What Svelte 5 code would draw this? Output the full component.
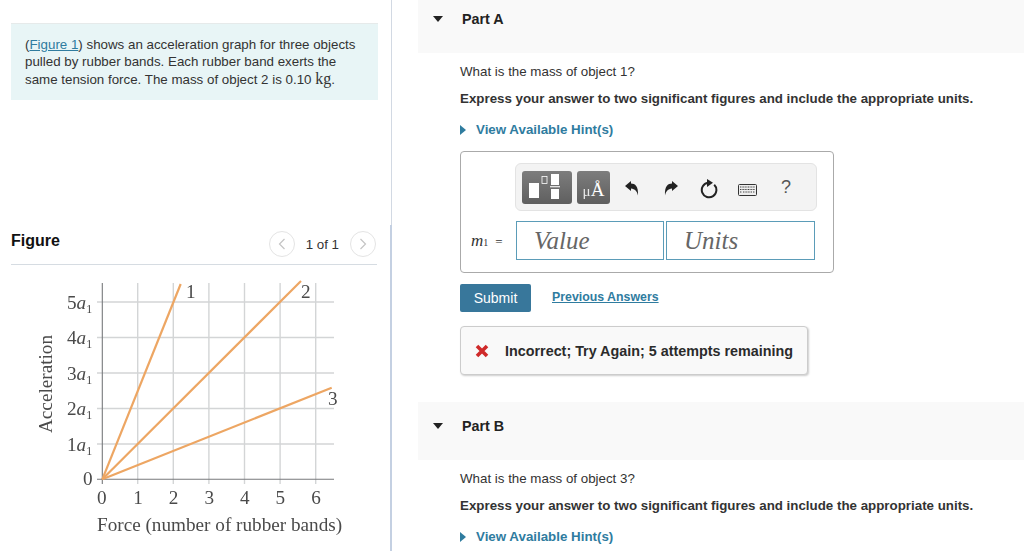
<script lang="ts">
	const gridX = [137.7, 173.3, 208.9, 244.5, 280.1, 315.7];
	const gridY = [302, 337.5, 373, 408.5, 444];
	const yLabels = ['5', '4', '3', '2', '1'];

	const parts = [
		{ name: 'Part A', question: 'What is the mass of object 1?' },
		{ name: 'Part B', question: 'What is the mass of object 3?' }
	];
</script>

<div class="page">
	<section class="left">
		<div class="intro">
			(<a href="#figure">Figure 1</a>) shows an acceleration graph for three objects pulled by rubber
			bands. Each rubber band exerts the same tension force. The mass of object 2 is 0.10 <span
				class="unit">kg</span>.
		</div>

		<div class="figure-head">
			<h2>Figure</h2>
			<div class="pager">
				<span class="round">
					<svg width="8" height="12" viewBox="0 0 8 12"><path d="M6.5 1 1.5 6l5 5" /></svg>
				</span>
				<span class="count">1 of 1</span>
				<span class="round">
					<svg width="8" height="12" viewBox="0 0 8 12"><path d="M1.5 1l5 5-5 5" /></svg>
				</span>
			</div>
		</div>

		<svg class="graph" width="366" height="286" viewBox="11 265 366 286">
			<g class="grid">
				{#each gridX as x}
					<line x1={x} y1="283" x2={x} y2="484" />
				{/each}
				{#each gridY as y}
					<line x1="97" y1={y} x2="334" y2={y} />
				{/each}
			</g>
			<g class="axis">
				<line x1="102.3" y1="283" x2="102.3" y2="484" />
				<line x1="97" y1="479.3" x2="334" y2="479.3" />
			</g>
			<g class="curves">
				<line x1="102.3" y1="479.3" x2="180.7" y2="284" />
				<line x1="102.3" y1="479.3" x2="301" y2="281" />
				<line x1="102.3" y1="479.3" x2="331.7" y2="387.7" />
			</g>
			<g class="labels">
				<text x="186" y="298">1</text>
				<text x="301" y="298">2</text>
				<text x="328" y="405">3</text>
				{#each yLabels as n, i}
					<text x="67" y={gridY[i] + 6.5}>{n}<tspan font-style="italic">a</tspan><tspan class="sub" dy="4">1</tspan></text>
				{/each}
				<text x="83" y="485">0</text>
				<text x="97" y="504">0</text>
				{#each gridX as x, i}
					<text x={x - 4.5} y="504">{i + 1}</text>
				{/each}
				<text x="97" y="531">Force (number of rubber bands)</text>
				<text transform="translate(52 433) rotate(-90)">Acceleration</text>
			</g>
		</svg>
	</section>

	<main class="right">
		{#each parts as part, i}
			<header class="part-head">
				<span class="caret"></span>
				<h3>{part.name}</h3>
			</header>
			<div class="part-body">
				<p class="question">{part.question}</p>
				<p class="instruction">Express your answer to two significant figures and include the appropriate units.</p>
				<div class="hint"><span class="hint-arrow"></span>View Available Hint(s)</div>

				{#if i === 0}
					<div class="answer">
						<div class="toolbar">
							<span class="tool tool-templates">
								<svg width="50" height="33" viewBox="0 0 50 33">
									<rect x="7" y="12" width="10" height="15" fill="#fff" />
									<rect x="20" y="5.4" width="5" height="7" fill="none" stroke="#fff" stroke-width="0.8" />
									<rect x="29" y="3" width="8" height="11" fill="#fff" />
									<rect x="28" y="15.2" width="10" height="1.1" fill="#fff" />
									<rect x="29" y="18" width="8" height="10" fill="#fff" />
								</svg>
							</span>
							<span class="tool tool-units"><small>μ</small>Å</span>
							<svg class="ic undo" width="14" height="16" viewBox="0 0 14 16">
								<path d="M0 5 6 0V2.5C10 2.5 13.5 5 13 14.5 12 10 10 8 6 7.5V10Z" />
							</svg>
							<svg class="ic redo" width="14" height="16" viewBox="0 0 14 16">
								<path d="M14 5 8 0V2.5C4 2.5 .5 5 1 14.5 2 10 4 8 8 7.5V10Z" />
							</svg>
							<svg class="ic reset" width="18" height="20" viewBox="0 0 18 20">
								<path class="ring" d="M14.2 5.8A7.3 7.3 0 1 1 8 3.8" />
								<path d="M7 0 13 3.7 7 8Z" />
							</svg>
							<svg class="ic keys" width="19" height="12" viewBox="0 0 19 12">
								<rect x="0.5" y="0.5" width="18" height="11" rx="1" fill="#eee" stroke="#333" />
								<path class="key-rows" d="M2 3h15M2 5.5h15M2 8h2M5 8h9M15 8h2" />
							</svg>
							<span class="help">?</span>
						</div>
						<div class="entry">
							<span class="var"><i>m</i><sub>1</sub><span class="eq">=</span></span>
							<span class="field">Value</span>
							<span class="field units">Units</span>
						</div>
					</div>

					<div class="actions">
						<button type="button">Submit</button>
						<a href="#previous">Previous Answers</a>
					</div>

					<div class="feedback">
						<svg width="14" height="14" viewBox="0 0 14 14">
							<path d="M2 2 12 12M12 2 2 12" />
						</svg>
						<span>Incorrect; Try Again; 5 attempts remaining</span>
					</div>
				{/if}
			</div>
		{/each}
	</main>
</div>

<style>
	:global(body) {
		margin: 0;
		background: #fff;
	}

	.page {
		display: flex;
		height: 551px;
		overflow: hidden;
		font-family: 'Liberation Sans', Arial, sans-serif;
		font-size: 13.33px;
		color: #333;
	}

	.left {
		position: relative;
		width: 392px;
		box-sizing: border-box;
		flex-shrink: 0;
		padding: 23px 0 0 11px;
		border-right: 1px solid #d2d9e3;
	}

	/* divider gets heavier from the figure down */
	.left::after {
		content: '';
		position: absolute;
		top: 225px;
		bottom: 0;
		left: 390px;
		width: 2px;
		background: #c4d0e2;
	}

	.intro {
		width: 367px;
		height: 77px;
		box-sizing: border-box;
		padding: 12px 14px 0;
		background: #e8f5f6;
		border-top: 1px solid #e6eaea;
		line-height: 17px;
	}

	.intro a {
		color: #2f7c9f;
	}

	.unit {
		font-family: 'Liberation Serif', serif;
		font-size: 16px;
	}

	.figure-head {
		display: flex;
		align-items: center;
		justify-content: space-between;
		width: 366px;
		height: 41px;
		margin-top: 124px;
		border-bottom: 1px solid #d6dce2;
		box-sizing: border-box;
	}

	h2 {
		margin: 0 0 6px;
		font-size: 16px;
		color: #111;
	}

	.pager {
		display: flex;
		align-items: center;
		gap: 11px;
		margin-right: 1px;
	}

	.round {
		display: flex;
		align-items: center;
		justify-content: center;
		box-sizing: border-box;
		width: 26px;
		height: 26px;
		border: 1px solid #e4e4e4;
		border-radius: 50%;
	}

	.round path {
		fill: none;
		stroke: #c4c4c4;
		stroke-width: 1.2;
	}

	.graph {
		display: block;
		filter: blur(0.4px);
	}

	.grid line {
		stroke: #d3d5d6;
		stroke-width: 1.4;
	}

	.axis line {
		stroke: #77797b;
		stroke-width: 1.1;
	}

	.curves line {
		stroke: #eda663;
		stroke-width: 2.2;
	}

	.labels text {
		font-family: 'Liberation Serif', serif;
		font-size: 19.2px;
		fill: #4a4a4a;
	}

	.sub {
		font-size: 12px;
	}

	.right {
		flex: 1;
		margin-top: -5px;
		padding-left: 26px;
	}

	.part-head {
		display: flex;
		align-items: flex-start;
		height: 58px;
		box-sizing: border-box;
		padding: 16px 0 0 15px;
		background: #f9f9f9;
	}

	.caret {
		width: 0;
		height: 0;
		margin-top: 5px;
		border-left: 5px solid transparent;
		border-right: 5px solid transparent;
		border-top: 6px solid #222;
	}

	h3 {
		margin: 0 0 0 19px;
		font-size: 14.3px;
		line-height: 16px;
		color: #222;
	}

	.part-body {
		padding: 11px 0 0 42px;
	}

	.part-body:not(:last-child) {
		height: 349px;
		box-sizing: border-box;
	}

	p {
		margin: 0;
		line-height: 15px;
	}

	.instruction {
		margin-top: 12px;
		font-weight: 700;
	}

	.hint {
		display: flex;
		align-items: center;
		margin-top: 16px;
		font-weight: 700;
		color: #2f7c9f;
		line-height: 15px;
	}

	.hint-arrow {
		width: 0;
		height: 0;
		margin-right: 10px;
		border-top: 5px solid transparent;
		border-bottom: 5px solid transparent;
		border-left: 6px solid #2f7c9f;
	}

	.answer {
		box-sizing: border-box;
		width: 374px;
		height: 122px;
		margin-top: 14px;
		padding: 11px 0 0 54px;
		border: 1px solid #aaa;
		border-radius: 4px;
	}

	.toolbar {
		display: flex;
		align-items: center;
		box-sizing: border-box;
		width: 302px;
		height: 48px;
		padding-left: 6px;
		background: #f3f3f3;
		border: 1px solid #e3e3e3;
		border-radius: 6px;
	}

	.tool {
		display: flex;
		align-items: center;
		justify-content: center;
		height: 33px;
		background: linear-gradient(#7d7d7d, #5f5f5f);
		border-radius: 3px;
		color: #fff;
	}

	.tool-templates {
		width: 50px;
	}

	.tool-units {
		align-items: baseline;
		box-sizing: border-box;
		padding-top: 8px;
		width: 33px;
		margin-left: 5px;
		font-family: 'Liberation Serif', serif;
		font-size: 19px;
	}

	.tool-units small {
		font-size: 15px;
		opacity: 0.85;
	}

	.ic {
		display: block;
		margin-top: 4px;
		fill: #222;
	}

	.undo {
		margin-left: 15px;
	}

	.redo {
		margin-left: 25px;
	}

	.reset {
		margin-left: 22px;
	}

	.reset .ring {
		fill: none;
		stroke: #222;
		stroke-width: 2;
	}

	.keys {
		margin-left: 20px;
		margin-top: 5px;
	}

	.key-rows {
		fill: none;
		stroke: #444;
		stroke-width: 1.2;
		stroke-dasharray: 1 0.6;
	}

	.help {
		margin-left: 24px;
		font-size: 18px;
		color: #555;
	}

	.entry {
		display: flex;
		align-items: center;
		margin: 10px 0 0 -54px;
	}

	.var {
		display: flex;
		align-items: baseline;
		width: 55px;
		box-sizing: border-box;
		padding-left: 10px;
		font-family: 'Liberation Serif', serif;
		font-size: 17px;
		white-space: nowrap;
	}

	.var sub {
		font-size: 10px;
		line-height: 0;
		margin-top: 3px;
	}

	.eq {
		margin-left: 7px;
		font-size: 13px;
	}

	.field {
		box-sizing: border-box;
		width: 148px;
		height: 39px;
		padding-left: 17px;
		border: 1px solid #5b9cb8;
		font-family: 'Liberation Serif', serif;
		font-size: 25px;
		font-style: italic;
		line-height: 37px;
		color: #666;
	}

	.units {
		width: 149px;
		margin-left: 2px;
	}

	.actions {
		display: flex;
		align-items: flex-start;
		margin-top: 11px;
	}

	button {
		width: 71px;
		height: 28px;
		padding: 0;
		background: #38779b;
		border: none;
		border-radius: 2px;
		font-family: inherit;
		font-size: 14px;
		color: #fff;
	}

	.actions a {
		margin: 6px 0 0 21px;
		font-weight: 700;
		font-size: 12.35px;
		line-height: 14px;
		color: #2f7c9f;
	}

	.feedback {
		display: flex;
		align-items: center;
		box-sizing: border-box;
		width: 348px;
		height: 49px;
		margin-top: 14px;
		padding-left: 14px;
		background: #f9f9f9;
		border: 1px solid #ccc;
		border-radius: 4px;
		box-shadow: 1px 1px 2px rgba(0, 0, 0, 0.2);
		font-weight: 700;
		font-size: 14.35px;
		color: #2b2b2b;
	}

	.feedback svg {
		margin-right: 16px;
	}

	.feedback path {
		fill: none;
		stroke: #cf2a2a;
		stroke-width: 3.6;
	}
</style>
